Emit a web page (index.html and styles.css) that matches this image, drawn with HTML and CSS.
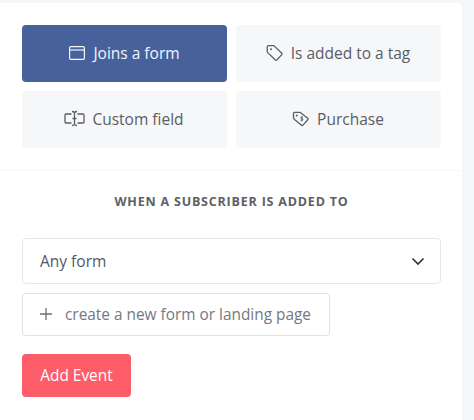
FILE: index.html
```html
<!DOCTYPE html>
<html lang="en">
<head>
<meta charset="utf-8">
<title>Add Event</title>
<link rel="stylesheet" href="styles.css">
</head>
<body>
<main class="card">
  <section class="types">
    <button class="type active">
      <svg class="icon" width="18" height="18" viewBox="0 0 18 18" fill="none" stroke="currentColor" stroke-width="1.200"><rect x="1.600" y="2.600" width="14.800" height="12.800" rx="1.200"/><path d="M1.600 6h14.800"/></svg>
      <span>Joins a form</span>
    </button>
    <button class="type">
      <svg class="icon" width="18" height="18" viewBox="0 0 18 18" fill="none" stroke="currentColor" stroke-width="1.300" stroke-linejoin="round"><path d="M1.200 3.200c0-.9.700-1.600 1.600-1.600h5l8 7.600c.4.400.4 1 0 1.400l-5 5.400c-.4.400-1 .4-1.400 0L1.700 8.600c-.3-.3-.5-.7-.5-1.100z"/><circle cx="5" cy="5.200" r="1" fill="currentColor" stroke="none"/></svg>
      <span>Is added to a tag</span>
    </button>
    <button class="type">
      <svg class="icon" width="21" height="18" viewBox="0 0 21 18" fill="none" stroke="currentColor" stroke-width="1.300"><path d="M7.500 4H2a1 1 0 0 0-1 1v7a1 1 0 0 0 1 1h5.500M13.500 4H19a1 1 0 0 1 1 1v7a1 1 0 0 1-1 1h-5.500"/><path d="M8 1.500c1 0 2 .5 2.500 1.200.5-.7 1.500-1.200 2.500-1.200M8 15.500c1 0 2-.5 2.500-1.200.5.700 1.500 1.200 2.500 1.200M10.500 2.700v11.600M8.500 8.500h4"/></svg>
      <span>Custom field</span>
    </button>
    <button class="type">
      <svg class="icon" width="18" height="18" viewBox="0 0 18 18" fill="none" stroke="currentColor" stroke-width="1.300" stroke-linejoin="round"><path d="M1.500 3.500c0-.7.500-1.200 1.200-1.200h5.300l7.700 6c.5.400.5 1 .1 1.400l-4.800 5.400c-.4.400-1 .5-1.400.1L2.500 9.500c-.6-.5-1-1.100-1-1.900z"/><circle cx="4.800" cy="5.500" r="1" fill="currentColor" stroke="none"/><path d="M11 7.300c-.7-.6-2-.5-2.200.4-.2 1 2.300.9 2 2-.2.800-1.500.9-2.300.3M9.900 6.400v5" stroke-width="1"/></svg>
      <span>Purchase</span>
    </button>
  </section>
  <section class="details">
    <h2 class="heading">WHEN A SUBSCRIBER IS ADDED TO</h2>
    <div class="select">
      <span>Any form</span>
      <svg width="14" height="9" viewBox="0 0 14 9" fill="none" stroke="#33363d" stroke-width="1.700"><path d="M1.500 1.500 7 7l5.500-5.500"/></svg>
    </div>
    <button class="create">
      <svg width="14" height="14" viewBox="0 0 14 14" fill="none" stroke="#6d7077" stroke-width="1.300"><path d="M7 1v12M1 7h12"/></svg>
      <span>create a new form or landing page</span>
    </button>
    <button class="submit">Add Event</button>
  </section>
</main>
</body>
</html>
```
FILE: styles.css
```css
* { box-sizing: border-box; }
html, body { height: 100%; }
body {
  margin: 0;
  padding: 3px 12px 0 0;
  background: #f5f6fa;
  font-family: "Open Sans", "Liberation Sans", sans-serif;
  color: #55585f;
  overflow: hidden;
}
button { font-family: inherit; cursor: pointer; }
.card {
  width: 462px;
  height: 417px;
  background: #fff;
  border-top-right-radius: 4px;
}
.types {
  display: grid;
  grid-template-columns: 205px 205px;
  grid-auto-rows: 57px;
  gap: 9px;
  padding: 22px 21px 22px 22px;
  border-bottom: 1px solid #f7f7f9;
  height: 168px;
}
.type {
  display: flex;
  align-items: center;
  justify-content: center;
  gap: 7px;
  padding: 0 1px 2px 0;
  border: 0;
  border-radius: 4px;
  background: #f6f7f9;
  color: #5a5d64;
  font-size: 15.500px;
}
.type.active {
  background: #46619c;
  color: #f3f5fa;
}
.details { padding: 0 21px 0 22px; }
.heading {
  margin: 0;
  padding-top: 22px;
  height: 67px;
  text-align: center;
  font-size: 12.500px;
  line-height: 17px;
  font-weight: 700;
  letter-spacing: 0.800px;
  color: #5e6066;
}
.select {
  display: flex;
  align-items: center;
  justify-content: space-between;
  height: 46px;
  padding: 0 15px 0 17px;
  border: 1px solid #e6e7eb;
  border-radius: 4px;
  font-size: 15.500px;
}
.create {
  display: flex;
  align-items: center;
  gap: 12px;
  width: 308px;
  height: 43px;
  margin-top: 9px;
  padding: 0 0 1px 16px;
  border: 1px solid #dfe1e6;
  border-radius: 4px;
  background: #fff;
  color: #75787f;
  font-size: 15.400px;
}
.submit {
  display: block;
  width: 109px;
  height: 43px;
  margin-top: 18px;
  padding: 0 0 1px;
  border: 0;
  border-radius: 4px;
  background: #fd5c69;
  color: #fff;
  font-size: 15.400px;
}
```
